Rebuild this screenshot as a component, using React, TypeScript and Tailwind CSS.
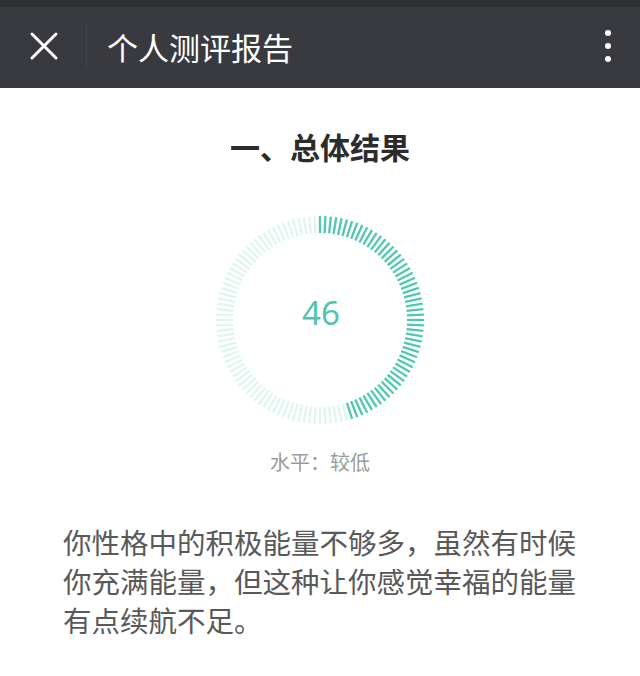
import React from 'react';

const TICKS = 120;
const SCORE = 46;

function ScoreRing({ score }: { score: number }) {
  const cx = 110;
  const cy = 110;
  const rOuter = 104;
  const rInner = 87;
  const active = Math.round((score / 100) * TICKS);
  const ticks = Array.from({ length: TICKS }, (_, i) => {
    const a = (i / TICKS) * Math.PI * 2;
    const sin = Math.sin(a);
    const cos = Math.cos(a);
    return (
      <line
        key={i}
        x1={cx + sin * rInner}
        y1={cy - cos * rInner}
        x2={cx + sin * rOuter}
        y2={cy - cos * rOuter}
        stroke={i < active ? '#4fc7b1' : '#dff5f0'}
        strokeWidth={2.3}
      />
    );
  });
  return (
    <svg width="220" height="220" viewBox="0 0 220 220">
      {ticks}
      <text
        x="111"
        y="115"
        textAnchor="middle"
        fill="#4fc4b0"
        fontSize="33"
        fontFamily="'Noto Sans', Roboto, sans-serif"
      >
        {score}
      </text>
    </svg>
  );
}

export default function App() {
  return (
    <div className="w-[640px] h-[676px] bg-white overflow-hidden" style={{ fontFamily: "'Noto Sans CJK SC', 'Noto Sans', sans-serif" }}>
      {/* top bar */}
      <div className="h-[7px] bg-[#2f3034]" />
      <div className="h-[81px] bg-[#393a3f] flex items-center pb-[3px]">
        <div className="w-[86px] flex justify-center pl-[1px]">
          <svg width="30" height="30" viewBox="0 0 30 30">
            <path d="M3 3 L27 27 M27 3 L3 27" stroke="#ffffff" strokeWidth="3" strokeLinecap="round" />
          </svg>
        </div>
        <div className="w-px h-[46px] bg-[#44454a]" />
        <div className="ml-[20px] text-white text-[31px] leading-none flex-1">个人测评报告</div>
        <div className="w-[60px] flex flex-col items-center gap-[7px] pr-[4px]">
          <span className="w-[6px] h-[6px] rounded-full bg-white" />
          <span className="w-[6px] h-[6px] rounded-full bg-white" />
          <span className="w-[6px] h-[6px] rounded-full bg-white" />
        </div>
      </div>

      <h2 className="mt-[38px] text-center text-[30px] leading-[40px] font-bold text-[#2c2c2c]">一、总体结果</h2>

      <div className="mt-[44px] flex justify-center">
        <ScoreRing score={SCORE} />
      </div>

      <p className="mt-[18px] text-center text-[20px] leading-[28px] text-[#9a9a9a]">水平：较低</p>

      <p className="mt-[46px] ml-[63px] w-[520px] text-[28.5px] leading-[39px] text-[#595959]">
        你性格中的积极能量不够多，虽然有时候你充满能量，但这种让你感觉幸福的能量有点续航不足。
      </p>
    </div>
  );
}
